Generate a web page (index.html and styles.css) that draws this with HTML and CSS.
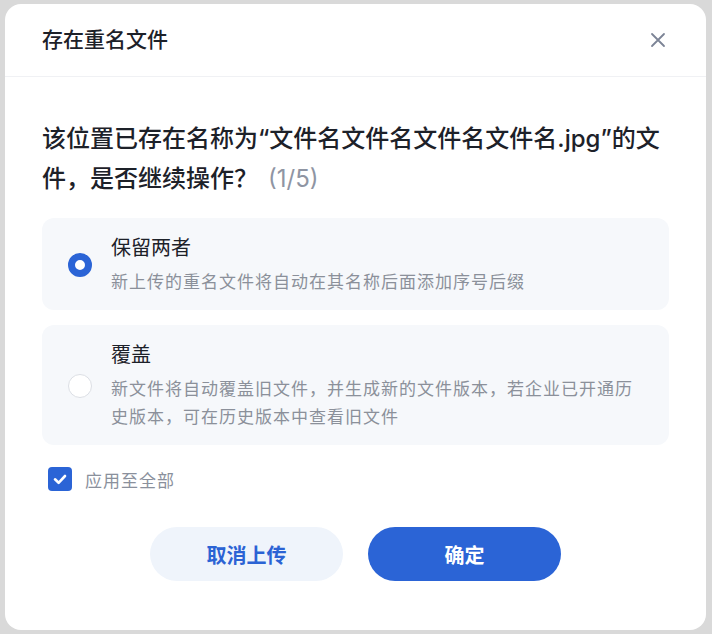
FILE: index.html
```html
<!DOCTYPE html>
<html lang="zh-CN">
<head>
<meta charset="utf-8">
<title>存在重名文件</title>
<link rel="stylesheet" href="styles.css">
</head>
<body>
<div class="dialog">
  <div class="header">
    <div class="title">存在重名文件</div>
    <svg class="close" width="16" height="16" viewBox="0 0 16 16" aria-label="关闭">
      <path d="M2 2 L14 14 M14 2 L2 14" stroke="#7c8496" stroke-width="1.8" stroke-linecap="round" fill="none"/>
    </svg>
  </div>
  <div class="body">
    <p class="question">该位置已存在名称为“文件名文件名文件名文件名.jpg”的文件，是否继续操作？<span class="count">(1/5)</span></p>
    <div class="options">
      <div class="option">
        <span class="radio checked"></span>
        <div class="option-text">
          <div class="option-title">保留两者</div>
          <div class="option-desc">新上传的重名文件将自动在其名称后面添加序号后缀</div>
        </div>
      </div>
      <div class="option">
        <span class="radio"></span>
        <div class="option-text">
          <div class="option-title">覆盖</div>
          <div class="option-desc">新文件将自动覆盖旧文件，并生成新的文件版本，若企业已开通历史版本，可在历史版本中查看旧文件</div>
        </div>
      </div>
    </div>
    <div class="apply">
      <span class="checkbox">
        <svg width="24" height="24" viewBox="0 0 24 24"><path d="M7 12.3 L10.6 15.8 L17 9" stroke="#fff" stroke-width="2.6" stroke-linecap="round" stroke-linejoin="round" fill="none"/></svg>
      </span>
      <span class="apply-label">应用至全部</span>
    </div>
    <div class="actions">
      <button class="btn btn-cancel">取消上传</button>
      <button class="btn btn-primary">确定</button>
    </div>
  </div>
</div>
</body>
</html>
```
FILE: styles.css
```css
* { box-sizing: border-box; }
html, body { height: 100%; }
body {
  margin: 0;
  padding: 4px 6px 4px 5px;
  background: #d9d9d9;
  font-family: "Inter", "Noto Sans CJK SC", sans-serif;
  color: #1d2129;
}
.dialog {
  width: 701px;
  height: 626px;
  background: #fff;
  border-radius: 16px;
  display: flex;
  flex-direction: column;
  overflow: hidden;
}
.header {
  height: 73px;
  flex: none;
  border-bottom: 1px solid #f0f1f4;
  display: flex;
  align-items: center;
  justify-content: space-between;
  padding: 0 40px 0 37px;
}
.title {
  font-size: 21px;
  font-weight: 500;
  line-height: 28px;
  color: #1d2129;
}
.close { display: block; }
.body {
  padding: 42px 37px 0;
  display: flex;
  flex-direction: column;
}
.question {
  margin: 0;
  font-size: 24px;
  line-height: 40px;
  font-weight: 500;
  color: #1d2129;
}
.count {
  font-weight: 400;
  color: #8f95a3;
  margin-left: 10px;
}
.options {
  margin-top: 19px;
  display: flex;
  flex-direction: column;
  gap: 15px;
}
.option {
  background: #f6f8fb;
  border-radius: 12px;
  padding: 16px 24px 14px 26px;
  display: flex;
  align-items: center;
  gap: 19px;
}
.radio {
  flex: none;
  width: 24px;
  height: 24px;
  border-radius: 50%;
  background: #fff;
  border: 1px solid #dcdfe5;
}
.radio.checked {
  border: 7.5px solid #2b64d6;
}
.option-text { flex: 1; min-width: 0; }
.option-title {
  font-size: 20px;
  line-height: 28px;
  color: #1d2129;
}
.option-desc {
  margin-top: 6px;
  font-size: 17px;
  letter-spacing: 1px;
  line-height: 28px;
  color: #8b909a;
}
.apply {
  margin-top: 20px;
  margin-left: 6px;
  height: 28px;
  display: flex;
  align-items: center;
  gap: 13px;
}
.checkbox {
  width: 24px;
  height: 24px;
  border-radius: 4px;
  background: #2b64d6;
  display: flex;
}
.apply-label {
  font-size: 17px;
  letter-spacing: 1px;
  color: #8a909c;
}
.actions {
  margin-top: 34px;
  display: flex;
  justify-content: center;
  gap: 25px;
}
.btn {
  width: 193px;
  height: 54px;
  border: none;
  border-radius: 27px;
  font-family: "Inter", "Noto Sans CJK SC", sans-serif;
  font-size: 20px;
  font-weight: 600;
  cursor: pointer;
}
.btn-cancel {
  background: #eff4fb;
  color: #2b63d4;
}
.btn-primary {
  background: #2b64d6;
  color: #fff;
}
```
